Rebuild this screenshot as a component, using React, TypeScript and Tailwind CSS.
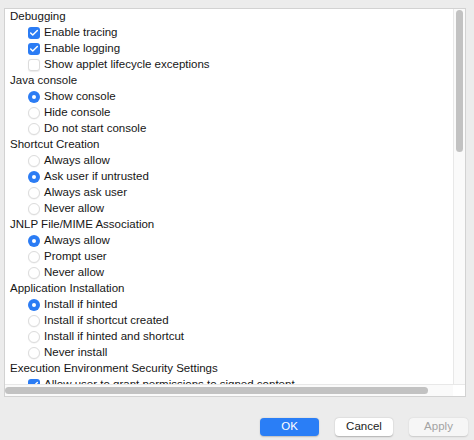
import { Check } from "lucide-react";

type Item = { label: string; kind: "check" | "radio"; on: boolean };
type Group = { title: string; items: Item[] };

const groups: Group[] = [
  {
    title: "Debugging",
    items: [
      { label: "Enable tracing", kind: "check", on: true },
      { label: "Enable logging", kind: "check", on: true },
      { label: "Show applet lifecycle exceptions", kind: "check", on: false },
    ],
  },
  {
    title: "Java console",
    items: [
      { label: "Show console", kind: "radio", on: true },
      { label: "Hide console", kind: "radio", on: false },
      { label: "Do not start console", kind: "radio", on: false },
    ],
  },
  {
    title: "Shortcut Creation",
    items: [
      { label: "Always allow", kind: "radio", on: false },
      { label: "Ask user if untrusted", kind: "radio", on: true },
      { label: "Always ask user", kind: "radio", on: false },
      { label: "Never allow", kind: "radio", on: false },
    ],
  },
  {
    title: "JNLP File/MIME Association",
    items: [
      { label: "Always allow", kind: "radio", on: true },
      { label: "Prompt user", kind: "radio", on: false },
      { label: "Never allow", kind: "radio", on: false },
    ],
  },
  {
    title: "Application Installation",
    items: [
      { label: "Install if hinted", kind: "radio", on: true },
      { label: "Install if shortcut created", kind: "radio", on: false },
      { label: "Install if hinted and shortcut", kind: "radio", on: false },
      { label: "Never install", kind: "radio", on: false },
    ],
  },
  {
    title: "Execution Environment Security Settings",
    items: [{ label: "Allow user to grant permissions to signed content", kind: "check", on: true }],
  },
];

const Control = ({ kind, on }: { kind: "check" | "radio"; on: boolean }) => {
  if (kind === "check") {
    return on ? (
      <span className="flex h-[12px] w-[12px] items-center justify-center rounded-[3px] bg-[#2b7cf4]">
        <Check className="h-[10px] w-[10px] text-white" strokeWidth={3.5} />
      </span>
    ) : (
      <span className="h-[12px] w-[12px] rounded-[3px] border border-[#dcdcdc] bg-white shadow-[0_0.5px_1px_rgba(0,0,0,0.08)]" />
    );
  }
  return on ? (
    <span className="flex h-[12px] w-[12px] items-center justify-center rounded-full bg-[#2b7cf4]">
      <span className="h-[4px] w-[4px] rounded-full bg-white" />
    </span>
  ) : (
    <span className="h-[12px] w-[12px] rounded-full border border-[#dcdcdc] bg-white shadow-[0_0.5px_1px_rgba(0,0,0,0.08)]" />
  );
};

const App = () => {
  return (
    <div
      className="h-[440px] w-[474px] bg-[#ececec] pt-[8px] text-[11.5px] text-[#161616]"
      style={{ fontFamily: '"Liberation Sans", Arial, sans-serif' }}
    >
      <div className="ml-[4px] flex h-[389px] w-[462px] flex-col border border-[#d2d2d2] bg-white">
        <div className="flex h-[375px]">
          <div className="w-[448px] overflow-hidden">
            {groups.map((g) => (
              <div key={g.title}>
                <div className="flex h-[16px] items-center whitespace-nowrap pl-[5px]">{g.title}</div>
                {g.items.map((it) => (
                  <div key={it.label} className="flex h-[16px] items-center gap-[4px] whitespace-nowrap pl-[23px]">
                    <Control kind={it.kind} on={it.on} />
                    <span>{it.label}</span>
                  </div>
                ))}
              </div>
            ))}
          </div>
          {/* vertical scrollbar */}
          <div className="w-[12px] border-l border-[#e8e8e8] bg-[#fafafa] pl-[2px] pt-[1px]">
            <div className="h-[142px] w-[7px] rounded-full bg-[#c2c2c2]" />
          </div>
        </div>
        {/* horizontal scrollbar */}
        <div className="flex h-[12px] border-t border-[#e8e8e8] bg-[#fafafa]">
          <div className="w-[448px] pt-[2px]">
            <div className="h-[7px] w-[423px] rounded-full bg-[#c2c2c2]" />
          </div>
          <div className="w-[12px] bg-white" />
        </div>
      </div>
      <div className="mt-[21px] flex justify-end gap-[16px] pr-[6px]">
        <button className="h-[18px] w-[59px] rounded-[4px] bg-[#2a7ef6] text-[11.5px] text-white shadow-[0_0.5px_1.5px_rgba(0,0,0,0.2)]">
          OK
        </button>
        <button className="h-[18px] w-[58px] rounded-[4px] bg-white text-[11.5px] text-[#1b1b1b] shadow-[0_0.5px_1.5px_rgba(0,0,0,0.25)]">
          Cancel
        </button>
        <button className="h-[18px] w-[59px] rounded-[4px] bg-[#f6f6f6] text-[11.5px] text-[#a3a3a3] shadow-[0_0.5px_1.5px_rgba(0,0,0,0.15)]">
          Apply
        </button>
      </div>
    </div>
  );
};

export default App;
